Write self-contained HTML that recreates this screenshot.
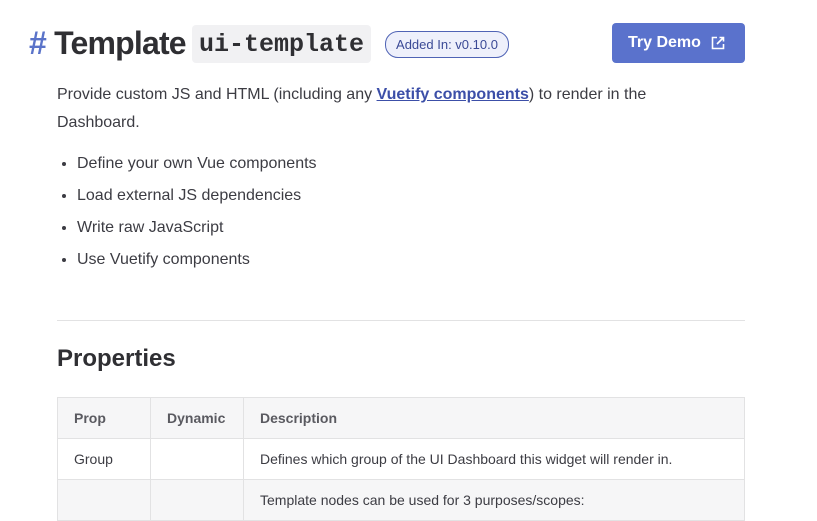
<!DOCTYPE html>
<html><head><style>
body{margin:0;background:#fff;font-family:"Liberation Sans",sans-serif;color:#3c3c43;width:817px;height:518px;overflow:hidden;position:relative}
.a{position:absolute;white-space:nowrap}
h1{position:absolute;left:29px;top:19px;margin:0;font-size:32px;font-weight:600;color:#2f2f33;letter-spacing:-0.8px;line-height:48px}
h1 .h{color:#5a73c9}
.code{position:absolute;left:192px;top:25px;width:179px;height:38px;background:#f1f1f3;border-radius:4px;font-family:"Liberation Mono",monospace;font-size:25px;font-weight:700;color:#2f2f33;line-height:40px;text-align:center}
.badge{position:absolute;left:385px;top:31px;width:122px;height:25px;border:1px solid #4f63b5;border-radius:13px;background:#eef0fb;color:#3b4a96;font-size:13px;line-height:25px;text-align:center}
.btn{position:absolute;left:612px;top:23px;width:133px;height:40px;background:#5a72cc;border-radius:4px;color:#fff;font-size:16px;font-weight:600;line-height:40px}
p{font-size:16px;margin:0}
ul{position:absolute;left:57px;top:148px;margin:0;padding-left:20px;font-size:16px;line-height:32px}
a{color:#3c4fa8;font-weight:600;text-decoration:underline}
table{position:absolute;left:57px;top:397px;border-collapse:collapse;font-size:14px;width:688px}
td,th{border:1px solid #e2e2e3;padding:0 16px;height:40px;text-align:left}
th{font-weight:600;color:#5a5a60;background:#f6f6f7}
</style></head><body>
<h1><span class="h">#</span> Template</h1>
<div class="code">ui-template</div>
<div class="badge">Added In: v0.10.0</div>
<div class="btn"><span style="position:absolute;left:16px">Try Demo</span>
<svg style="position:absolute;left:99px;top:13px" width="14" height="14" viewBox="0 0 14 14" fill="none" stroke="#fff" stroke-width="1.6"><path d="M6 1.5H1.5v11h11V8M8.5 1.5h4v4M12.5 1.5L6 8"/></svg></div>
<p class="a" style="left:57px;top:84px;line-height:22px">Provide custom JS and HTML (including any <a>Vuetify components</a>) to render in the</p>
<p class="a" style="left:57px;top:112px;line-height:22px">Dashboard.</p>
<ul><li>Define your own Vue components</li><li>Load external JS dependencies</li><li>Write raw JavaScript</li><li>Use Vuetify components</li></ul>
<div class="a" style="left:57px;top:320px;width:688px;height:1px;background:#e2e2e3"></div>
<div class="a" style="left:57px;top:345px;font-size:24px;font-weight:600;color:#2f2f33">Properties</div>
<table>
<tr><th style="width:60px">Prop</th><th style="width:60px">Dynamic</th><th>Description</th></tr>
<tr><td>Group</td><td></td><td>Defines which group of the UI Dashboard this widget will render in.</td></tr>
<tr style="background:#f6f6f7"><td></td><td></td><td>Template nodes can be used for 3 purposes/scopes:</td></tr>
</table>
</body></html>
